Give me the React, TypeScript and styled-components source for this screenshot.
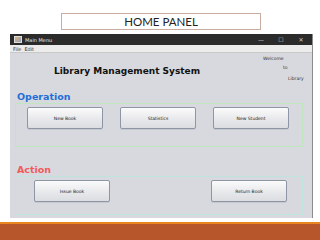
import React from 'react';
import styled, { createGlobalStyle } from 'styled-components';

const GlobalStyle = createGlobalStyle`
  html, body {
    margin: 0;
    padding: 0;
    background: #ffffff;
  }
  #root {
    width: 320px;
    height: 240px;
    overflow: hidden;
  }
`;

const Slide = styled.div`
  width: 320px;
  height: 240px;
  display: flex;
  flex-direction: column;
  background: #ffffff;
  font-family: 'DejaVu Sans', Verdana, sans-serif;
`;

const TitleBox = styled.div`
  margin: 13px 0 0 61px;
  width: 200px;
  height: 17px;
  box-sizing: border-box;
  border: 1px solid #c8aea0;
  display: flex;
  align-items: center;
  justify-content: center;
  font-family: Lato, 'Open Sans', sans-serif;
  font-size: 11.5px;
  color: #222;
`;

const Window = styled.div`
  margin: 4px 0 0 10px;
  width: 303px;
  box-sizing: border-box;
  border-right: 1px solid #8a8a8a;
  display: flex;
  flex-direction: column;
`;

const TitleBar = styled.div`
  height: 11px;
  background: #2b2b2b;
  display: flex;
  align-items: center;
  padding: 0 1px 0 4px;
  color: #e8e8e8;
  font-size: 5px;
`;

const AppIcon = styled.span`
  width: 6px;
  height: 5px;
  background: linear-gradient(135deg, #e2b070, #8aa5c8);
  border: 1px solid #ddd;
  margin-right: 3px;
`;

const TitleText = styled.span`
  flex: 1;
`;

const Ctrl = styled.span`
  width: 20px;
  text-align: center;
  font-size: 6px;
  color: #cfcfcf;
`;

const MenuBar = styled.div`
  height: 7px;
  background: #ececec;
  border-bottom: 1px solid #c8c8c8;
  display: flex;
  align-items: center;
  gap: 3px;
  padding-left: 3px;
  font-size: 5px;
  color: #333;
`;

const Content = styled.div`
  height: 165px;
  background: #d7d9de;
  display: flex;
  flex-direction: column;
  padding: 0 9px 0 5px;
`;

const HeaderRow = styled.div`
  height: 37px;
  display: flex;
  justify-content: space-between;
`;

const Heading = styled.div`
  margin: 13px 0 0 39px;
  font-size: 9px;
  font-weight: bold;
  color: #111;
`;

const Welcome = styled.div`
  position: relative;
  width: 40px;
  font-size: 4.5px;
  color: #333;
`;

const WelcomeLine = styled.span<{ $x: number; $y: number }>`
  position: absolute;
  left: ${({ $x }) => $x}px;
  top: ${({ $y }) => $y}px;
`;

const SectionLabel = styled.div<{ $color: string }>`
  height: 13px;
  padding-left: 2px;
  font-size: 9.5px;
  font-weight: bold;
  color: ${({ $color }) => $color};
  line-height: 13px;
`;

const Panel = styled.div<{ $border: string; $h: number; $pad: string }>`
  height: ${({ $h }) => $h}px;
  box-sizing: border-box;
  border: 1px solid ${({ $border }) => $border};
  display: flex;
  align-items: flex-start;
  padding: ${({ $pad }) => $pad};
  justify-content: space-between;
`;

const Button = styled.div`
  width: 76px;
  height: 22px;
  box-sizing: border-box;
  border: 1px solid #8e96a6;
  border-radius: 2px;
  background: linear-gradient(#fbfbfb, #e6e7ea 60%, #dcdde1);
  box-shadow: 0 1px 0 #c5c8cf;
  display: flex;
  align-items: center;
  justify-content: center;
  font-size: 4.5px;
  color: #222;
`;

const Gap = styled.div<{ $h: number }>`
  height: ${({ $h }) => $h}px;
`;

const Footer = styled.div`
  margin-top: 4px;
  border-top: 2px solid #e9861f;
  flex: 1;
  background: #b8562b;
`;

export default function App() {
  return (
    <>
      <GlobalStyle />
      <Slide>
        <TitleBox>HOME PANEL</TitleBox>
        <Window>
          <TitleBar>
            <AppIcon />
            <TitleText>Main Menu</TitleText>
            <Ctrl>—</Ctrl>
            <Ctrl>☐</Ctrl>
            <Ctrl>✕</Ctrl>
          </TitleBar>
          <MenuBar>
            <span>File</span>
            <span>Edit</span>
          </MenuBar>
          <Content>
            <HeaderRow>
              <Heading>Library Management System</Heading>
              <Welcome>
                <WelcomeLine $x={0} $y={3}>Welcome</WelcomeLine>
                <WelcomeLine $x={20} $y={12}>to</WelcomeLine>
                <WelcomeLine $x={25} $y={23}>Library</WelcomeLine>
              </Welcome>
            </HeaderRow>
            <SectionLabel $color="#1f6fd8">Operation</SectionLabel>
            <Panel $border="#bfe6bf" $h={44} $pad="3px 13px 0 11px">
              <Button>New Book</Button>
              <Button>Statistics</Button>
              <Button>New Student</Button>
            </Panel>
            <Gap $h={16} />
            <SectionLabel $color="#f25a5a">Action</SectionLabel>
            <Panel $border="#bfe3df" $h={39} $pad="3px 15px 0 18px">
              <Button>Issue Book</Button>
              <Button>Return Book</Button>
            </Panel>
          </Content>
        </Window>
        <Footer />
      </Slide>
    </>
  );
}
